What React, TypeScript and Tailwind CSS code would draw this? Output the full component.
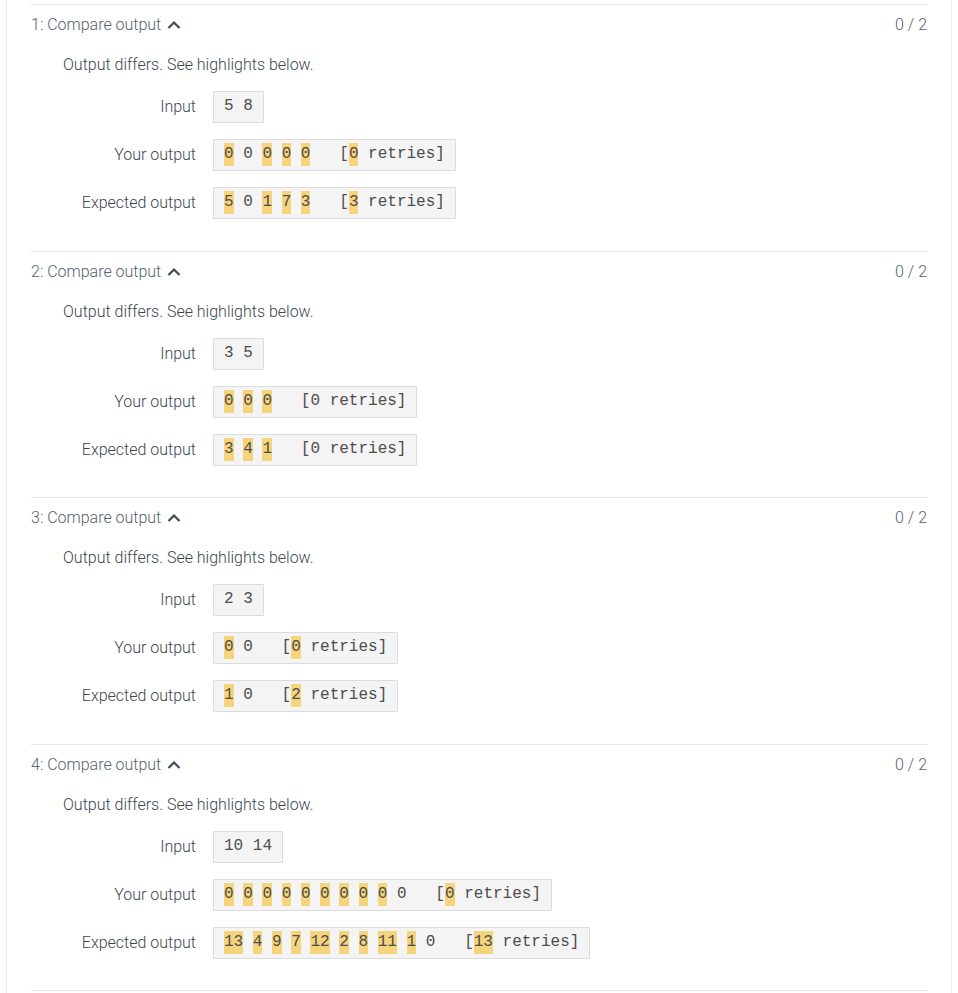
import React from "react";

type Tok = { t: string; h?: boolean };

const H = (t: string): Tok => ({ t, h: true });
const P = (t: string): Tok => ({ t });

type Section = {
  n: number;
  input: string;
  yours: Tok[];
  expected: Tok[];
};

const sections: Section[] = [
  {
    n: 1,
    input: "5 8",
    yours: [H("0"), P(" 0 "), H("0"), P(" "), H("0"), P(" "), H("0"), P("   ["), H("0"), P(" retries]")],
    expected: [H("5"), P(" 0 "), H("1"), P(" "), H("7"), P(" "), H("3"), P("   ["), H("3"), P(" retries]")],
  },
  {
    n: 2,
    input: "3 5",
    yours: [H("0"), P(" "), H("0"), P(" "), H("0"), P("   [0 retries]")],
    expected: [H("3"), P(" "), H("4"), P(" "), H("1"), P("   [0 retries]")],
  },
  {
    n: 3,
    input: "2 3",
    yours: [H("0"), P(" 0   ["), H("0"), P(" retries]")],
    expected: [H("1"), P(" 0   ["), H("2"), P(" retries]")],
  },
  {
    n: 4,
    input: "10 14",
    yours: [
      H("0"), P(" "), H("0"), P(" "), H("0"), P(" "), H("0"), P(" "), H("0"), P(" "),
      H("0"), P(" "), H("0"), P(" "), H("0"), P(" "), H("0"), P(" 0   ["), H("0"), P(" retries]"),
    ],
    expected: [
      H("13"), P(" "), H("4"), P(" "), H("9"), P(" "), H("7"), P(" "), H("12"), P(" "),
      H("2"), P(" "), H("8"), P(" "), H("11"), P(" "), H("1"), P(" 0   ["), H("13"), P(" retries]"),
    ],
  },
];

function Box({ toks }: { toks: Tok[] }) {
  return (
    <div className="inline-block self-start border border-[#dcdcdc] bg-[#f4f4f4] px-[10px] pt-[3px] pb-[4px] font-['Liberation_Mono',monospace] text-[16px] font-normal leading-[23px] text-[#4d4d4d] whitespace-pre rounded-[1px]">
      {toks.map((k, i) =>
        k.h ? (
          <span key={i} className="inline-block bg-[#f6d47c] leading-[23px]">
            {k.t}
          </span>
        ) : (
          <span key={i}>{k.t}</span>
        )
      )}
    </div>
  );
}

function Row({ label, children }: { label: string; children: React.ReactNode }) {
  return (
    <>
      <div className="text-right text-[16px] leading-[24px] text-[#3b4651]">{label}</div>
      <div className="flex">{children}</div>
    </>
  );
}

function Chevron() {
  return (
    <svg width="14" height="10" viewBox="0 0 14 10" className="ml-[6px]">
      <polyline
        points="1.5,8 7,2.5 12.5,8"
        fill="none"
        stroke="#3d4b59"
        strokeWidth="2.2"
        strokeLinecap="butt"
        strokeLinejoin="miter"
      />
    </svg>
  );
}

function SectionView({ s }: { s: Section }) {
  return (
    <div className="border-t border-[#e6e6e6] pt-[8px] pb-[31.5px]">
      <div className="flex items-center justify-between text-[16px] leading-[24px] text-[#55626f]">
        <div className="flex items-center">
          <span>{s.n}: Compare output</span>
          <Chevron />
        </div>
        <span>0 / 2</span>
      </div>
      <div className="mt-[16px] pl-[32px] text-[16px] leading-[24px] text-[#3b4651]">
        Output differs. See highlights below.
      </div>
      <div className="mt-[14px] ml-[32px] grid grid-cols-[133px_auto] items-center gap-x-[17px] gap-y-[16px]">
        <Row label="Input">
          <Box toks={[P(s.input)]} />
        </Row>
        <Row label="Your output">
          <Box toks={s.yours} />
        </Row>
        <Row label="Expected output">
          <Box toks={s.expected} />
        </Row>
      </div>
    </div>
  );
}

export default function App() {
  return (
    <div className="min-h-[993px] bg-white px-[6px] font-['Roboto',sans-serif] font-light">
      <div className="min-h-[993px] border-x border-[#efefef] px-[24px] pt-[4px]">
        {sections.map((s) => (
          <SectionView key={s.n} s={s} />
        ))}
        <div className="border-t border-[#e6e6e6]" />
      </div>
    </div>
  );
}
